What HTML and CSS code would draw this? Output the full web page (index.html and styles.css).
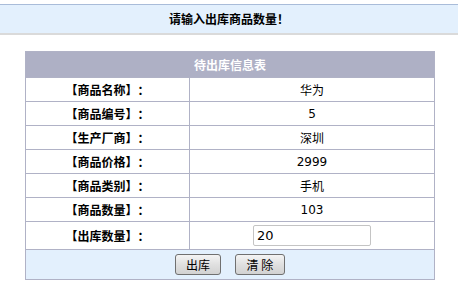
FILE: index.html
```html
<!DOCTYPE html>
<html lang="zh-CN">
<head>
  <meta charset="UTF-8">
  <title>商品出库</title>
  <link rel="stylesheet" href="styles.css">
</head>
<body>
  <div class="page-title">请输入出库商品数量！</div>

  <form class="out-form" onsubmit="return false">
    <table class="info-table">
      <tr>
        <th colspan="2">待出库信息表</th>
      </tr>
      <tr>
        <td class="label">【商品名称】：</td>
        <td class="value">华为</td>
      </tr>
      <tr>
        <td class="label">【商品编号】：</td>
        <td class="value">5</td>
      </tr>
      <tr>
        <td class="label">【生产厂商】：</td>
        <td class="value">深圳</td>
      </tr>
      <tr>
        <td class="label">【商品价格】：</td>
        <td class="value">2999</td>
      </tr>
      <tr>
        <td class="label">【商品类别】：</td>
        <td class="value">手机</td>
      </tr>
      <tr>
        <td class="label">【商品数量】：</td>
        <td class="value">103</td>
      </tr>
      <tr class="input-row">
        <td class="label">【出库数量】：</td>
        <td class="value"><input type="text" class="qty-input" name="num" value="20"></td>
      </tr>
      <tr class="button-row">
        <td colspan="2">
          <button type="submit" class="btn">出库</button>
          <button type="reset" class="btn btn-wide">清 除</button>
        </td>
      </tr>
    </table>
  </form>
</body>
</html>
```

FILE: styles.css
```css
* {
  box-sizing: border-box;
}

body {
  margin: 0;
  font-family: "DejaVu Sans", "Noto Sans CJK SC", sans-serif;
  font-size: 12px;
  color: #000;
  background: #fff;
  text-spacing-trim: space-all;
}

.page-title {
  margin-top: 4px;
  height: 31px;
  line-height: 28px;
  text-align: center;
  font-family: "Noto Sans CJK SC", sans-serif;
  font-size: 12px;
  font-weight: bold;
  background: #e3f0fd;
  border-top: 1px solid #a9bcd9;
  border-bottom: 2px solid #dadada;
}

.out-form {
  margin: 16px 0 0 25px;
}

.info-table {
  width: 410px;
  border-collapse: collapse;
}

.info-table th,
.info-table td {
  border: 1px solid #b0b2c6;
  padding: 0;
  text-align: center;
}

.info-table th {
  height: 26px;
  background: #aeb0c5;
  color: #fff;
  font-family: "Noto Sans CJK SC", sans-serif;
  font-weight: bold;
}

.info-table td {
  height: 24px;
}

.info-table .label {
  width: 164px;
  font-family: "Noto Sans CJK SC", sans-serif;
  font-weight: bold;
}

.input-row td {
  height: 28px;
}

.qty-input {
  width: 118px;
  height: 21px;
  padding: 0 3px;
  border: 1px solid #c4c4c4;
  border-radius: 2px;
  font-family: inherit;
  font-size: 13px;
  vertical-align: middle;
}

.button-row td {
  height: 30px;
  background: #e3f0fd;
}

.btn {
  width: 46px;
  height: 21px;
  margin: 0 5px;
  padding: 0;
  font-family: "Noto Sans CJK SC", sans-serif;
  font-size: 12px;
  color: #000;
  background: linear-gradient(#f4f4f4, #e0e0e0 50%, #d2d2d2);
  border: 1px solid #707070;
  border-radius: 3px;
  vertical-align: middle;
}

.btn-wide {
  width: 50px;
}
```
